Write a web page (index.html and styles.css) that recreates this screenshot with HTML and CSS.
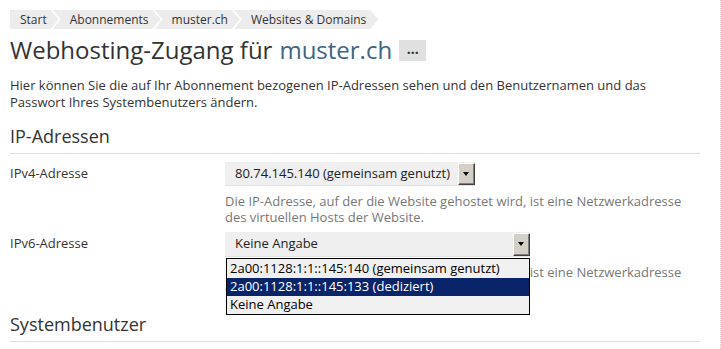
FILE: index.html
```html
<!DOCTYPE html>
<html lang="de">
<head>
<meta charset="utf-8">
<title>Webhosting-Zugang</title>
<link rel="stylesheet" href="styles.css">
</head>
<body>
<div class="page">
  <nav class="crumbs">
    <span class="crumb first">Start</span>
    <span class="crumb">Abonnements</span>
    <span class="crumb">muster.ch</span>
    <span class="crumb">Websites &amp; Domains</span>
  </nav>
  <h1 class="title">Webhosting-Zugang für <span class="domain">muster.ch</span> <span class="more">...</span></h1>
  <p class="intro">Hier können Sie die auf Ihr Abonnement bezogenen IP-Adressen sehen und den Benutzernamen und das Passwort Ihres Systembenutzers ändern.</p>

  <h2 class="section">IP-Adressen</h2>
  <div class="form">
    <div class="row">
      <div class="label">IPv4-Adresse</div>
      <div class="field">
        <div class="select w1"><span class="value">80.74.145.140 (gemeinsam genutzt)</span><span class="arrow"></span></div>
        <div class="hint">Die IP-Adresse, auf der die Website gehostet wird, ist eine Netzwerkadresse des virtuellen Hosts der Website.</div>
      </div>
    </div>
    <div class="row">
      <div class="label">IPv6-Adresse</div>
      <div class="field">
        <div class="select w2"><span class="value">Keine Angabe</span><span class="arrow"></span>
          <ul class="list">
            <li>2a00:1128:1:1::145:140 (gemeinsam genutzt)</li>
            <li class="sel">2a00:1128:1:1::145:133 (dediziert)</li>
            <li>Keine Angabe</li>
          </ul>
        </div>
        <div class="hint">Die IP-Adresse, auf der die Website gehostet wird, ist eine Netzwerkadresse des virtuellen Hosts der Website.</div>
      </div>
    </div>
  </div>
  <h2 class="section sys">Systembenutzer</h2>
</div>
</body>
</html>
```

FILE: styles.css
```css
html, body {
  margin: 0;
  padding: 0;
  background: #fff;
}
body {
  width: 720px;
  height: 349px;
  border-right: 1px dotted #c8c8c8;
  overflow: hidden;
  font-family: "Open Sans", "DejaVu Sans", sans-serif;
  font-size: 13px;
  color: #333;
}
.page {
  width: 690px;
  padding: 10px 0 0 10px;
}
.crumbs {
  display: flex;
  height: 19px;
}
.crumb {
  display: block;
  height: 19px;
  line-height: 19px;
  font-size: 12px;
  color: #333;
  background: #ececec;
  padding: 0 12px 0 17px;
  margin-left: -6px;
  clip-path: polygon(0 0, calc(100% - 8px) 0, 100% 50%, calc(100% - 8px) 100%, 0 100%, 8px 50%);
}
.crumb.first {
  margin-left: 0;
  padding-left: 10px;
  clip-path: polygon(0 0, calc(100% - 8px) 0, 100% 50%, calc(100% - 8px) 100%, 0 100%);
}
.title {
  margin: 6px 0 0;
  font-size: 24px;
  font-weight: normal;
  line-height: 30px;
  color: #333;
  display: flex;
  align-items: center;
}
.domain {
  color: #3d6584;
  margin-left: 7px;
}
.more {
  display: inline-block;
  width: 27px;
  height: 21px;
  line-height: 17px;
  margin-left: 7px;
  background: #e0e0e0;
  font-size: 14px;
  font-weight: bold;
  text-align: center;
  color: #333;
}
.intro {
  margin: 12px 0 0;
  line-height: 17px;
  width: 660px;
}
.section {
  margin: 13px 0 0;
  font-size: 18px;
  font-weight: normal;
  line-height: 24px;
  padding-bottom: 5px;
  border-bottom: 1px solid #dedede;
  color: #333;
}
.form {
  padding-top: 8px;
}
.row {
  display: grid;
  grid-template-columns: 215px 1fr;
}
.label {
  line-height: 17px;
  padding-top: 3px;
}
.select {
  position: relative;
  display: flex;
  height: 24px;
  background: #efefef;
  border-bottom: 1px solid #e2e2e2;
  box-sizing: border-box;
}
.w1 { width: 250px; }
.w2 { width: 305px; height: 25px; }
.value {
  flex: 1;
  padding-left: 10px;
  line-height: 23px;
  font-size: 13px;
  color: #222;
}
.arrow {
  width: 17px;
  margin: 1px 0 0;
  box-sizing: border-box;
  background: #d4d0c8;
  border: 1px solid;
  border-color: #fff #404040 #404040 #fff;
  box-shadow: inset -1px -1px 0 #808080;
  position: relative;
}
.arrow::after {
  content: "";
  position: absolute;
  left: 4px;
  top: 8px;
  border-left: 3.5px solid transparent;
  border-right: 3.5px solid transparent;
  border-top: 4px solid #000;
}
.hint {
  color: #777;
  line-height: 16px;
  padding: 7px 0 7px;
  width: 480px;
}
.list {
  position: absolute;
  left: 1px;
  top: 26px;
  width: 304px;
  margin: 0;
  padding: 1px 0 0;
  list-style: none;
  background: #f0f0f0;
  border: 1px solid #000;
  box-sizing: border-box;
  z-index: 2;
}
.list li {
  height: 18px;
  line-height: 17px;
  padding-left: 3px;
  font-size: 13px;
  color: #000;
}
.list li.sel {
  background: #0a246a;
  color: #fff;
}
.sys {
  margin-top: 9px;
}
```
